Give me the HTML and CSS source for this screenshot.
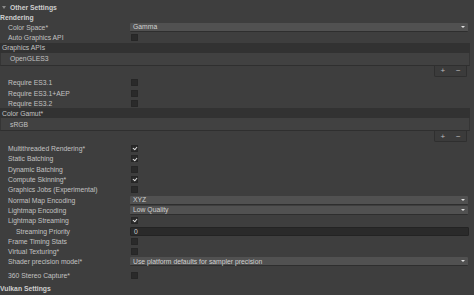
FILE: index.html
```html
<!DOCTYPE html>
<html lang="en">
<head>
    <meta charset="UTF-8">
    <title>Player Settings</title>
    <link rel="stylesheet" href="styles.css">
</head>
<body>
    <div class="inspector">
        <div class="foldout"><span class="fold-arrow"></span>Other Settings</div>

        <div class="section">Rendering</div>
        <div class="row"><span class="label">Color Space*</span><div class="popup">Gamma<span class="popup-arrow"></span></div></div>
        <div class="row"><span class="label">Auto Graphics API</span><span class="check"></span></div>

        <div class="list">
            <div class="list-head">Graphics APIs</div>
            <div class="list-body">OpenGLES3</div>
            <div class="list-foot"><div class="list-btns"><span>+</span><span>−</span></div></div>
        </div>

        <div class="row"><span class="label">Require ES3.1</span><span class="check"></span></div>
        <div class="row"><span class="label">Require ES3.1+AEP</span><span class="check"></span></div>
        <div class="row"><span class="label">Require ES3.2</span><span class="check"></span></div>

        <div class="list">
            <div class="list-head">Color Gamut*</div>
            <div class="list-body">sRGB</div>
            <div class="list-foot"><div class="list-btns"><span>+</span><span>−</span></div></div>
        </div>

        <div class="row"><span class="label">Multithreaded Rendering*</span><span class="check on"></span></div>
        <div class="row"><span class="label">Static Batching</span><span class="check on"></span></div>
        <div class="row"><span class="label">Dynamic Batching</span><span class="check"></span></div>
        <div class="row"><span class="label">Compute Skinning*</span><span class="check on"></span></div>
        <div class="row"><span class="label">Graphics Jobs (Experimental)</span><span class="check"></span></div>
        <div class="row"><span class="label">Normal Map Encoding</span><div class="popup">XYZ<span class="popup-arrow"></span></div></div>
        <div class="row"><span class="label">Lightmap Encoding</span><div class="popup">Low Quality<span class="popup-arrow"></span></div></div>
        <div class="row"><span class="label">Lightmap Streaming</span><span class="check on"></span></div>
        <div class="row"><span class="label sub">Streaming Priority</span><div class="field">0</div></div>
        <div class="row"><span class="label">Frame Timing Stats</span><span class="check"></span></div>
        <div class="row"><span class="label">Virtual Texturing*</span><span class="check"></span></div>
        <div class="row"><span class="label">Shader precision model*</span><div class="popup">Use platform defaults for sampler precision<span class="popup-arrow"></span></div></div>
        <div class="row spaced"><span class="label">360 Stereo Capture*</span><span class="check"></span></div>

        <div class="section spaced">Vulkan Settings</div>
        <div class="row"><span class="label">SRGB Write Mode*</span><span class="check"></span></div>
    </div>
</body>
</html>
```

FILE: styles.css
```css
body {
    margin: 0;
    background: #3e3e3e;
    font-family: "Liberation Sans", Arial, sans-serif;
    font-size: 6.8px;
    color: #c2c2c2;
    overflow: hidden;
}
.inspector {
    width: 470px;
}
.foldout {
    height: 12px;
    display: flex;
    align-items: center;
    padding-top: 1px;
    font-weight: bold;
    color: #cfcfcf;
}
.fold-arrow {
    width: 0;
    height: 0;
    margin: 0 4px 0 2px;
    border-left: 2px solid transparent;
    border-right: 2px solid transparent;
    border-top: 3px solid #8a8a8a;
}
.section {
    height: 9px;
    display: flex;
    align-items: center;
    font-weight: bold;
    color: #cfcfcf;
}
.section.spaced {
    margin-top: 3px;
    height: 10.3px;
}
.row {
    height: 10.3px;
    display: grid;
    grid-template-columns: 130px 1fr;
    align-items: center;
}
.row.spaced {
    margin-top: 3.5px;
}
.label {
    padding-left: 8px;
    white-space: nowrap;
}
.label.sub {
    padding-left: 16px;
}
.check {
    width: 7px;
    height: 7px;
    margin-left: 1px;
    background: #2a2a2a;
    border-radius: 1px;
    box-shadow: inset 0 0 0 1px #262626;
    display: flex;
    align-items: center;
    justify-content: center;
}
.check.on::after {
    content: "";
    width: 3px;
    height: 1.5px;
    border-left: 1px solid #e4e4e4;
    border-bottom: 1px solid #e4e4e4;
    transform: rotate(-50deg) translate(0.3px, -0.5px);
}
.popup {
    height: 8px;
    margin-right: 2px;
    background: #515151;
    border-bottom: 1px solid #2e2e2e;
    border-radius: 1px;
    padding-left: 3px;
    display: flex;
    align-items: center;
    justify-content: space-between;
    color: #d0d0d0;
    white-space: nowrap;
}
.popup-arrow {
    width: 0;
    height: 0;
    margin-right: 3px;
    border-left: 2px solid transparent;
    border-right: 2px solid transparent;
    border-top: 2px solid #e0e0e0;
}
.field {
    height: 9px;
    margin-right: 1px;
    background: #2a2a2a;
    border: 1px solid #232323;
    box-sizing: border-box;
    border-radius: 1px;
    padding-left: 3px;
    display: flex;
    align-items: center;
    color: #d0d0d0;
}
.list-head {
    height: 10px;
    background: #323232;
    padding-left: 2px;
    display: flex;
    align-items: center;
}
.list-body {
    height: 12px;
    background: #414141;
    border-left: 1px solid #353535;
    border-right: 1px solid #353535;
    border-bottom: 1px solid #2f2f2f;
    padding-left: 9px;
    display: flex;
    align-items: center;
}
.list-foot {
    height: 11px;
    margin-bottom: 1px;
    display: flex;
    justify-content: flex-end;
}
.list-btns {
    width: 31px;
    margin-right: 3px;
    background: #3b3b3b;
    border: 1px solid #2f2f2f;
    border-top: none;
    border-radius: 0 0 2px 2px;
    display: flex;
    justify-content: space-around;
    align-items: center;
    font-size: 8px;
    color: #bdbdbd;
}
```
